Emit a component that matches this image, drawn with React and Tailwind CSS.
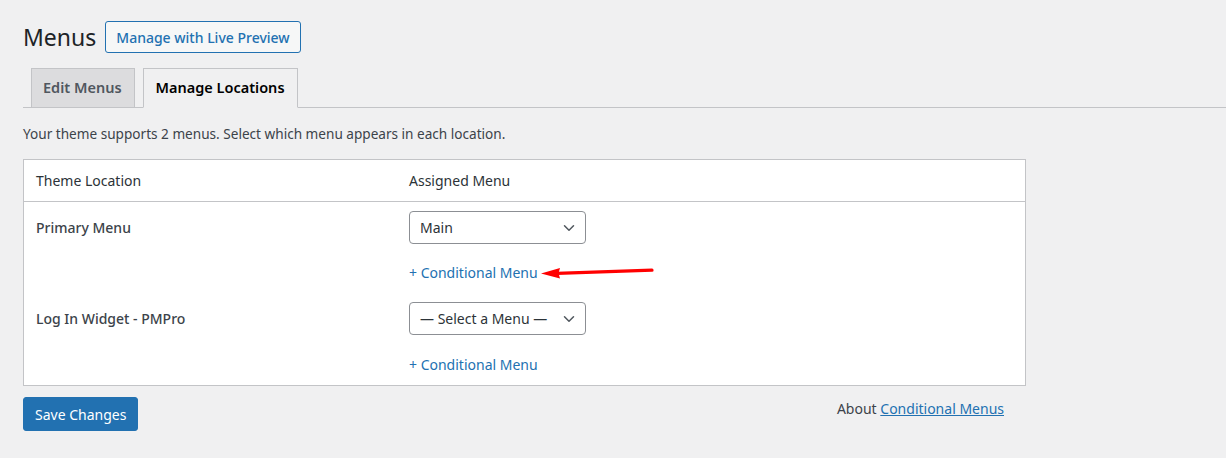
import { ChevronDown } from "lucide-react";

const font = { fontFamily: '"Noto Sans", "Open Sans", sans-serif' };

const MenuSelect = ({ value }) => (
  <div className="flex h-[33px] w-[177px] items-center justify-between rounded-[4px] border border-[#8c8f94] bg-white pl-[10px] pr-[7px] text-[14px] text-[#2c3338]">
    <span className="whitespace-nowrap">{value}</span>
    <ChevronDown size={18} strokeWidth={2} className="shrink-0 text-[#50575e]" />
  </div>
);

const CondLink = ({ arrow, last }) => (
  <div className={`relative flex items-center text-[14px] text-[#2271b1] ${last ? "mt-[19px]" : "mt-[18px]"}`}>
    <span>+ Conditional Menu</span>
    {arrow && (
      <svg className="absolute left-[130px] top-[2px]" width="120" height="16" viewBox="0 0 120 16">
        <polygon points="2,9.5 21,4 19.5,9.3 21,14.5" fill="#ff0000" />
        <path d="M18 9.4 L113 6.2" stroke="#ff0000" strokeWidth="3.2" strokeLinecap="round" />
      </svg>
    )}
  </div>
);

export default function App() {
  return (
    <div className="min-h-screen bg-[#f0f0f1] pl-[23px] pt-[21px] text-[#3c434a]" style={font}>
      <div className="flex items-center gap-[9px]">
        <h1 className="text-[23px] leading-[32px] font-normal text-[#1d2327]">Menus</h1>
        <button className="h-[32px] rounded-[3px] border border-[#2271b1] bg-[#f6f7f7] px-[10px] text-[14px] font-medium text-[#2271b1]">
          Manage with Live Preview
        </button>
      </div>

      <div className="mt-[15px] flex items-end gap-[8px] border-b border-[#c3c4c7] pl-[8px]">
        <div className="-mb-px flex h-[40px] items-center border border-[#c3c4c7] bg-[#dcdcde] pl-[11px] pr-[12px] text-[14.5px] font-semibold text-[#50575e]">
          Edit Menus
        </div>
        <div className="-mb-px flex h-[40px] items-center border border-[#c3c4c7] border-b-[#f0f0f1] bg-[#f0f0f1] px-[12px] text-[14.5px] font-semibold text-[#000]">
          Manage Locations
        </div>
      </div>

      <p className="mt-[16px] text-[13.6px] leading-[19px]">Your theme supports 2 menus. Select which menu appears in each location.</p>

      <div className="mt-[16px] w-[1003px] border border-[#c3c4c7] bg-white">
        <div className="flex h-[42px] items-center border-b border-[#c3c4c7] text-[14px] text-[#2c3338]">
          <div className="w-[385px] pl-[12px]">Theme Location</div>
          <div>Assigned Menu</div>
        </div>

        <div className="flex pt-[9px]">
          <div className="w-[385px] pl-[12px] pt-[6px] text-[14px] font-medium text-[#3c434a]">Primary Menu</div>
          <div className="pb-[8px]">
            <MenuSelect value="Main" />
            <CondLink arrow />
          </div>
        </div>

        <div className="flex pt-[11px] pb-[10px]">
          <div className="w-[385px] pl-[12px] pt-[6px] text-[14px] font-medium text-[#3c434a]">Log In Widget - PMPro</div>
          <div>
            <MenuSelect value="— Select a Menu —" />
            <CondLink last />
          </div>
        </div>
      </div>

      <div className="mt-[11px] flex w-[1003px] items-start justify-between">
        <button className="h-[34px] rounded-[3px] border border-[#2271b1] bg-[#2271b1] px-[11px] text-[14px] text-white">
          Save Changes
        </button>
        <p className="mr-[22px] mt-[1px] text-[14px]">
          About <span className="text-[#2271b1] underline">Conditional Menus</span>
        </p>
      </div>
    </div>
  );
}
